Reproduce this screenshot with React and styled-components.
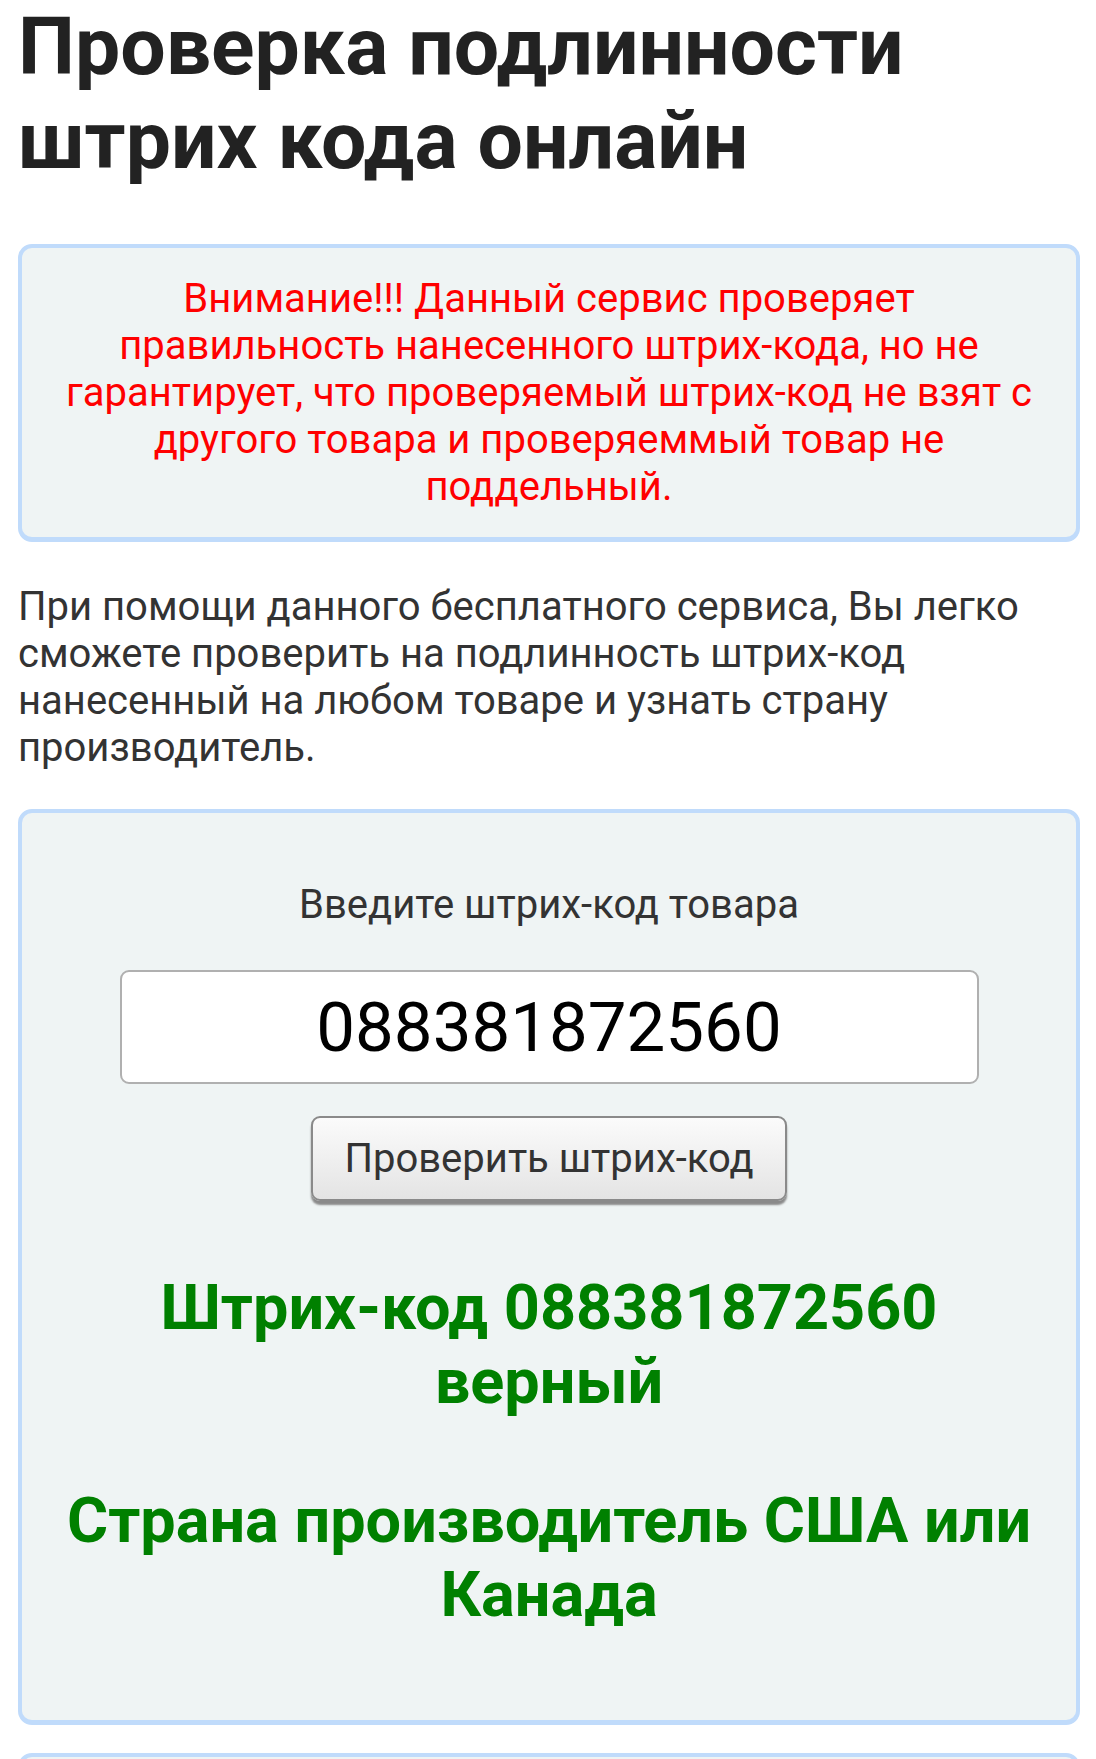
import React from 'react';
import styled, { createGlobalStyle } from 'styled-components';

const GlobalStyle = createGlobalStyle`
  body {
    margin: 0;
    background: #fff;
    font-family: Roboto, 'Liberation Sans', sans-serif;
  }
`;

const App = () => {
  const code = '088381872560';

  return (
    <>
      <GlobalStyle />
      <Page>
        <Title>Проверка подлинности штрих кода онлайн</Title>

        <Panel $pad='27px 35px 27px' $gap='41px'>
          <Warning>
            Внимание!!! Данный сервис проверяет правильность нанесенного
            штрих-кода, но не гарантирует, что проверяемый штрих-код не взят с
            другого товара и проверяеммый товар не поддельный.
          </Warning>
        </Panel>

        <Intro>
          При помощи данного бесплатного сервиса, Вы легко сможете проверить на
          подлинность штрих-код нанесенный на любом товаре и узнать страну
          производитель.
        </Intro>

        <Panel $pad='68px 30px 88px' $gap='28px'>
          <Form onSubmit={(e) => e.preventDefault()}>
            <Label htmlFor='barcode'>Введите штрих-код товара</Label>
            <CodeInput id='barcode' type='text' defaultValue={code} />
            <CheckButton type='submit'>Проверить штрих-код</CheckButton>
          </Form>
          <Result>Штрих-код {code} верный</Result>
          <Result>Страна производитель США или Канада</Result>
        </Panel>

        <Panel $pad='30px 20px' $gap='0'>
          <Spacer />
        </Panel>
      </Page>
    </>
  );
};

export default App;

const Page = styled.main`
  padding: 0 16px 0 18px;
  color: #333;
`;

const Title = styled.h1`
  margin: 0 0 56px;
  font-size: 80.5px;
  line-height: 94px;
  font-weight: 700;
  color: #222;
`;

const Panel = styled.section`
  background-color: #eff4f4;
  border: 4px solid #c0dbfb;
  border-bottom-width: 5px;
  border-radius: 14px;
  padding: ${(p) => p.$pad};
  margin-bottom: ${(p) => p.$gap};
`;

const Warning = styled.p`
  margin: 0;
  text-align: center;
  color: #f00;
  font-size: 40px;
  line-height: 47px;
`;

const Intro = styled.p`
  margin: 0 0 38px;
  font-size: 40px;
  line-height: 47px;
  color: #333;
`;

const Spacer = styled.div`
  height: 120px;
`;

const Form = styled.form`
  display: flex;
  flex-direction: column;
  align-items: center;
`;

const Label = styled.label`
  font-size: 40px;
  line-height: 47px;
  color: #333;
  margin-bottom: 42px;
`;

const CodeInput = styled.input`
  box-sizing: border-box;
  width: 859px;
  height: 114px;
  border: 2px solid #b0b0b0;
  border-radius: 9px;
  background: #fff;
  text-align: center;
  font-family: Roboto, 'Liberation Sans', sans-serif;
  font-size: 69px;
  color: #000;
  margin: 0 0 32px;
  padding: 0 12px;
  outline: none;
`;

const CheckButton = styled.button`
  box-sizing: border-box;
  width: 476px;
  height: 85px;
  border: 2px solid #8a8a8a;
  border-radius: 9px;
  background: linear-gradient(#fbfbfb, #e4e4e4);
  box-shadow: 0 4px 2px #8a8a8a;
  font-family: Roboto, 'Liberation Sans', sans-serif;
  font-size: 40px;
  color: #333;
  margin-bottom: 70px;
`;

const Result = styled.h3`
  margin: 0 0 65px;
  text-align: center;
  font-size: 63px;
  line-height: 74px;
  font-weight: 700;
  color: #008000;

  &:last-child {
    margin-bottom: 0;
  }
`;
